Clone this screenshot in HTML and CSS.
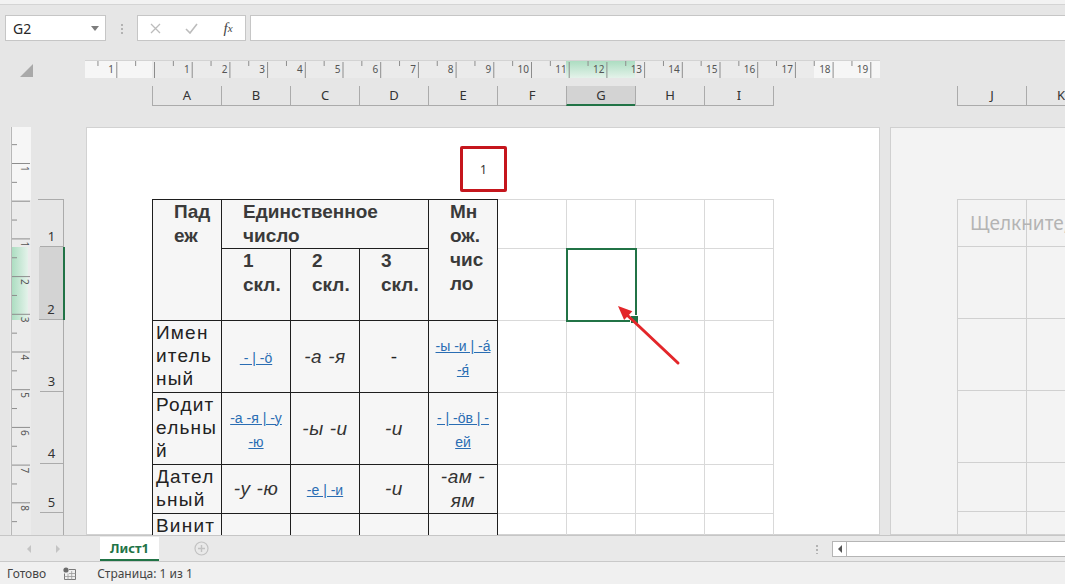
FILE: index.html
```html
<!DOCTYPE html>
<html lang="ru">
<head>
  <meta charset="UTF-8">
  <meta name="viewport" content="width=device-width, initial-scale=1.0">
  <title>Книга1 - Excel</title>
  <link rel="stylesheet" href="styles.css">
</head>
<body>
  <div class="titlebar"></div>

  <!-- Name box + formula bar -->
  <div class="formula-row">
    <div class="namebox"><span>G2</span><span class="caret"></span></div>
    <div class="grip"></div>
    <div class="fx-buttons">
      <span class="fx-btn">
        <svg width="11" height="11" viewBox="0 0 11 11"><path d="M1 1L10 10M10 1L1 10" stroke="#bcbcbc" stroke-width="1.3" fill="none"/></svg>
      </span>
      <span class="fx-btn">
        <svg width="13" height="11" viewBox="0 0 13 11"><path d="M1 6L5 10L12 1" stroke="#bcbcbc" stroke-width="1.6" fill="none"/></svg>
      </span>
      <span class="fx-btn fx">f<small>x</small></span>
    </div>
    <div class="formula-input"></div>
  </div>

  <!-- Horizontal ruler -->
  <div class="ruler-row">
    <svg class="corner" width="13" height="13" viewBox="0 0 13 13"><path d="M13 0L13 13L0 13Z" fill="#a9a9a9"/></svg>
    <svg class="hruler" width="795" height="18" viewBox="0 0 795 18">
      <defs>
        <pattern id="hticks" patternUnits="userSpaceOnUse" x="31.3" y="0" width="37.7" height="18">
          <path d="M0.5 2V18M19.35 1V6" stroke="#8c8c8c" stroke-width="1"/>
        </pattern>
        <linearGradient id="hsel" x1="0" y1="0" x2="0" y2="1">
          <stop offset="0" stop-color="#a9dcbf"/>
          <stop offset="1" stop-color="#e4f2ea"/>
        </linearGradient>
      </defs>
      <rect width="795" height="18" fill="#ebebeb"/>
      <rect width="67" height="18" fill="#f6f6f6"/>
      <rect x="729" width="66" height="18" fill="#f6f6f6"/>
      <rect x="481" width="69" height="18" fill="url(#hsel)"/>
      <rect x="0" y="1" width="795" height="17" fill="url(#hticks)"/>
      <path d="M0 0.5H795" stroke="#d3d3d3"/>
      <g class="rnum" text-anchor="end">
        <text x="29" y="13">1</text>
        <text x="104.7" y="13">1</text>
        <text x="142.4" y="13">2</text>
        <text x="180.1" y="13">3</text>
        <text x="217.8" y="13">4</text>
        <text x="255.5" y="13">5</text>
        <text x="293.2" y="13">6</text>
        <text x="330.9" y="13">7</text>
        <text x="368.6" y="13">8</text>
        <text x="406.3" y="13">9</text>
        <text x="444" y="13">10</text>
        <text x="481.7" y="13">11</text>
        <text x="519.4" y="13">12</text>
        <text x="557.1" y="13">13</text>
        <text x="594.8" y="13">14</text>
        <text x="632.5" y="13">15</text>
        <text x="670.2" y="13">16</text>
        <text x="707.9" y="13">17</text>
        <text x="745.6" y="13">18</text>
        <text x="783.3" y="13">19</text>
      </g>
    </svg>
  </div>

  <!-- Column headers -->
  <div class="colheads">
    <div class="ch">A</div>
    <div class="ch">B</div>
    <div class="ch">C</div>
    <div class="ch">D</div>
    <div class="ch">E</div>
    <div class="ch">F</div>
    <div class="ch active">G</div>
    <div class="ch">H</div>
    <div class="ch last">I</div>
    <div class="ch-gap"></div>
    <div class="ch">J</div>
    <div class="ch">K</div>
  </div>

  <div class="main">
    <!-- Vertical ruler -->
    <svg class="vruler" width="21" height="408" viewBox="0 0 21 408">
      <defs>
        <pattern id="vticks" patternUnits="userSpaceOnUse" x="0" y="36" width="21" height="37.7">
          <path d="M1 0.5H20M1 19.35H7" stroke="#8c8c8c" stroke-width="1"/>
        </pattern>
        <linearGradient id="vsel" x1="0" y1="0" x2="1" y2="0">
          <stop offset="0" stop-color="#a9dcbf"/>
          <stop offset="1" stop-color="#e4f2ea"/>
        </linearGradient>
      </defs>
      <rect width="21" height="408" fill="#ebebeb"/>
      <rect x="1" width="20" height="73" fill="#f6f6f6"/>
      <rect x="1" y="120" width="17" height="73" fill="url(#vsel)"/>
      <rect x="1" y="0" width="20" height="408" fill="url(#vticks)"/>
      <path d="M1.5 0V408" stroke="#b8b8b8"/>
      <g class="rnum">
        <text transform="translate(11 39) rotate(90)">1</text>
        <text transform="translate(11 114.4) rotate(90)">1</text>
        <text transform="translate(11 152.1) rotate(90)">2</text>
        <text transform="translate(11 189.8) rotate(90)">3</text>
        <text transform="translate(11 227.5) rotate(90)">4</text>
        <text transform="translate(11 265.2) rotate(90)">5</text>
        <text transform="translate(11 302.9) rotate(90)">6</text>
        <text transform="translate(11 340.6) rotate(90)">7</text>
        <text transform="translate(11 378.3) rotate(90)">8</text>
      </g>
    </svg>

    <!-- Row headers -->
    <div class="rowheads">
      <div class="rh r1">1</div>
      <div class="rh r2 active">2</div>
      <div class="rh r3">3</div>
      <div class="rh r4">4</div>
      <div class="rh r5">5</div>
      <div class="rh r6"></div>
    </div>

    <!-- Page 1 -->
    <div class="page">
      <div class="page-head">
        <div class="page-num">1</div>
      </div>
      <table class="sheet">
        <colgroup>
          <col><col><col><col><col><col><col><col><col>
        </colgroup>
        <tr class="r1">
          <th class="t hd" rowspan="2">Пад<br>еж</th>
          <th class="t hd" colspan="3">Единственное<br>число</th>
          <th class="t hd" rowspan="2">Мн<br>ож.<br>чис<br>ло</th>
          <td class="g"></td><td class="g"></td><td class="g"></td><td class="g"></td>
        </tr>
        <tr class="r2">
          <th class="t hd">1<br>скл.</th>
          <th class="t hd">2<br>скл.</th>
          <th class="t hd">3<br>скл.</th>
          <td class="g"></td><td class="g sel"></td><td class="g"></td><td class="g"></td>
        </tr>
        <tr class="r3">
          <td class="t case">Имен<br>итель<br>ный</td>
          <td class="t c"><a class="lk" href="#">&nbsp;- | -ӧ</a></td>
          <td class="t c it">-а -я</td>
          <td class="t c">-</td>
          <td class="t c"><a class="lk" href="#">-ы -и | -а́<br>-я́</a></td>
          <td class="g"></td><td class="g"></td><td class="g"></td><td class="g"></td>
        </tr>
        <tr class="r4">
          <td class="t case">Родит<br>ельны<br>й</td>
          <td class="t c"><a class="lk" href="#">-а -я | -у<br>-ю</a></td>
          <td class="t c it">-ы -и</td>
          <td class="t c it">-и</td>
          <td class="t c"><a class="lk" href="#">- | -ӧв | -<br>ей</a></td>
          <td class="g"></td><td class="g"></td><td class="g"></td><td class="g"></td>
        </tr>
        <tr class="r5">
          <td class="t case">Дател<br>ьный</td>
          <td class="t c it">-у -ю</td>
          <td class="t c"><a class="lk" href="#">-е | -и</a></td>
          <td class="t c it">-и</td>
          <td class="t c it">-ам -<br>ям</td>
          <td class="g"></td><td class="g"></td><td class="g"></td><td class="g"></td>
        </tr>
        <tr class="r6">
          <td class="t case">Винит</td>
          <td class="t"></td><td class="t"></td><td class="t"></td><td class="t"></td>
          <td class="g"></td><td class="g"></td><td class="g"></td><td class="g"></td>
        </tr>
      </table>

      <svg class="arrow" width="75" height="70" viewBox="0 0 75 70">
        <path d="M14 14L66 63" stroke="#e3262a" stroke-width="3" stroke-linecap="round"/>
        <path d="M6 6L12.1 19.9L20.3 11.3Z" fill="#e3262a"/>
      </svg>
    </div>

    <!-- Page 2 (empty) -->
    <div class="page next">
      <div class="page-head"></div>
      <table class="sheet blank">
        <colgroup><col><col><col></colgroup>
        <tr class="r1"><td class="hint">Щелкните, чтобы добавить данные</td><td></td><td></td></tr>
        <tr class="r2"><td></td><td></td><td></td></tr>
        <tr class="r3"><td></td><td></td><td></td></tr>
        <tr class="r4"><td></td><td></td><td></td></tr>
        <tr class="r5"><td></td><td></td><td></td></tr>
        <tr class="r6"><td></td><td></td><td></td></tr>
      </table>
    </div>
  </div>

  <!-- Sheet tabs -->
  <div class="tabbar">
    <div class="tabnav">
      <span class="tri left"></span>
      <span class="tri right"></span>
    </div>
    <div class="tab">Лист1</div>
    <div class="addsheet">
      <svg width="15" height="15" viewBox="0 0 15 15"><circle cx="7.5" cy="7.5" r="6.5" fill="none" stroke="#c2c2c2" stroke-width="1.2"/><path d="M7.5 4V11M4 7.5H11" stroke="#c2c2c2" stroke-width="1.4"/></svg>
    </div>
    <div class="spacer"></div>
    <div class="grip small"></div>
    <div class="hscroll">
      <span class="sbtn"><span class="tri left dark"></span></span>
      <span class="track"></span>
    </div>
  </div>

  <!-- Status bar -->
  <div class="statusbar">
    <span class="st-ready">Готово</span>
    <svg class="st-icon" width="13" height="13" viewBox="0 0 13 13">
      <circle cx="3" cy="3" r="2.6" fill="#6b6b6b"/>
      <path d="M6 2.5H12.5V12.5H1.5V6.5" fill="none" stroke="#7a7a7a"/>
      <path d="M1.5 9.5H12.5M5 6.5V12.5M8.7 4V12.5M6 6.5H12.5" stroke="#9a9a9a" stroke-width="0.8"/>
    </svg>
    <span class="st-page">Страница: 1 из 1</span>
  </div>
</body>
</html>
```

FILE: styles.css
```css
* { margin: 0; padding: 0; box-sizing: border-box; }
body { width: 1065px; height: 584px; overflow: hidden; background: #e6e6e6; font-family: "Noto Sans", "Open Sans", sans-serif; font-size: 12px; color: #444; }

/* top strip + formula bar */
.titlebar { height: 5px; background: #f2f2f2; border-bottom: 1px solid #d4d4d4; }
.formula-row { display: flex; height: 26px; margin-top: 10px; }
.namebox { width: 101px; margin-left: 5px; background: #fff; border: 1px solid #c6c6c6; display: flex; align-items: center; justify-content: space-between; padding: 0 6px 0 7px; font-size: 14px; color: #262626; }
.caret { width: 0; height: 0; border-left: 4px solid transparent; border-right: 4px solid transparent; border-top: 5px solid #7d7d7d; }
.grip { width: 2px; height: 11px; align-self: center; margin: 0 14px 0 15px; background: radial-gradient(circle, #b3b3b3 0.9px, transparent 1.1px) 0 0 / 2px 4px; }
.fx-buttons { width: 109px; background: #fff; border: 1px solid #c6c6c6; display: flex; }
.fx-btn { width: 36px; display: flex; align-items: center; justify-content: center; }
.fx { font-family: "Liberation Serif", serif; font-style: italic; font-size: 15px; color: #444; padding-left: 2px; }
.fx small { font-size: 11px; }
.formula-input { flex: 1; margin-left: 4px; background: #fff; border: 1px solid #c6c6c6; border-right: none; }

/* rulers */
.ruler-row { display: flex; align-items: flex-end; height: 18px; margin-top: 19px; }
.corner { margin-left: 20px; margin-bottom: 1px; }
.hruler { margin-left: 52px; display: block; }
.rnum { font-family: "Noto Sans", sans-serif; font-size: 10px; fill: #555; }
.vruler { display: block; margin-left: 10px; margin-top: 21px; flex-shrink: 0; }

/* column headers */
.colheads { display: flex; height: 20px; margin-top: 8px; padding-left: 152px; }
.ch { width: 69px; flex-shrink: 0; border-left: 1px solid #ababab; border-bottom: 1px solid #ababab; text-align: center; line-height: 19px; font-size: 13px; color: #333; }
.ch.last { border-right: 1px solid #ababab; width: 70px; }
.ch.active { background: #d3d3d3; border-bottom: 2px solid #217346; }
.ch-gap { width: 183px; flex-shrink: 0; }

/* sheet area */
.main { display: flex; height: 429px; overflow: hidden; }
.rowheads { width: 26px; margin-left: 7px; margin-top: 93px; border-right: 1px solid #ababab; flex-shrink: 0; border-top: 1px solid #ababab; }
.rh { display: flex; align-items: flex-end; justify-content: center; padding-bottom: 1px; border-bottom: 1px solid #ababab; font-size: 13px; color: #333; margin-left: 2px; }
.rh.active { background: #d3d3d3; box-shadow: 2px 0 0 #217346; margin-left: 1px; }
.rowheads .r1 { height: 47px; }
.rowheads .r2 { height: 73px; }
.rowheads .r3 { height: 72px; }
.rowheads .r4 { height: 72px; }
.rowheads .r5 { height: 49px; }
.rowheads .r6 { height: 49px; }

.page { position: relative; width: 794px; margin-left: 22px; margin-top: 21px; background: #fff; border: 1px solid #d2d2d2; flex-shrink: 0; }
.page.next { width: 200px; margin-left: 10px; background: #f3f3f3; border-color: #d0d0d0; overflow: hidden; }
.page-head { height: 71px; display: flex; justify-content: center; align-items: flex-start; }
.page-num { width: 47px; height: 46px; margin-top: 18px; margin-left: 1px; border: 3px solid #c5161d; border-radius: 2px; display: flex; align-items: center; justify-content: center; font-size: 12px; color: #333; }

/* first two rows come out one pixel taller than set (collapsed borders) */
.sheet { border-collapse: collapse; table-layout: fixed; width: 621px; margin-left: 65px; }
.sheet col { width: 69px; }
.sheet .r1 { height: 47px; }
.sheet .r2 { height: 72px; }
.sheet .r3 { height: 72px; }
.sheet .r4 { height: 72px; }
.sheet .r5 { height: 49px; }
.sheet .r6 { height: 49px; }
.sheet td, .sheet th { padding: 0; white-space: nowrap; }
.t { background: #f6f6f6; border: 1px solid #1e1e1e; font-family: "Liberation Sans", Arial, sans-serif; font-size: 19px; line-height: 24px; color: #222; }
.hd { text-align: left; vertical-align: top; font-weight: bold; color: #3a3a3a; padding: 0 0 0 21px !important; }
.case { vertical-align: top; padding: 0 0 0 3px !important; line-height: 23px; letter-spacing: 1.2px; }
.c { text-align: center; vertical-align: middle; }
.it { font-style: italic; color: #333; letter-spacing: 0.6px; }
.lk { font-size: 14px; line-height: 20px; color: #2a6db3; text-decoration: underline; letter-spacing: 0; }
.g { border: 1px solid #d9d9d9; }
.g.sel { position: relative; outline: 2px solid #217346; outline-offset: -1px; }
.g.sel::after { content: ''; position: absolute; right: -4px; bottom: -4px; width: 7px; height: 7px; background: #217346; border: 1px solid #fff; }
.arrow { position: absolute; left: 525px; top: 172px; }

.blank { width: 207px; margin-left: 66px; }
.blank td { border: 1px solid #d0d0d0; }
.hint { font-size: 19px; color: #b4b4b4; padding-left: 12px !important; overflow: visible; }

/* sheet tabs */
.tabbar { display: flex; height: 26px; border-top: 1px solid #c6c6c6; background: #e9e9e9; }
.tabnav { width: 100px; display: flex; align-items: center; padding-left: 27px; gap: 25px; }
.tri { width: 0; height: 0; border-top: 4px solid transparent; border-bottom: 4px solid transparent; }
.tri.left { border-right: 4px solid #c4c4c4; }
.tri.right { border-left: 4px solid #c4c4c4; }
.tri.left.dark { border-right-color: #555; }
.tab { width: 59px; margin-top: 1px; background: #fff; border-bottom: 2px solid #217346; display: flex; align-items: center; justify-content: center; font-weight: bold; font-size: 13px; color: #217346; }
.addsheet { margin-left: 35px; display: flex; align-items: center; }
.spacer { flex: 1; }
.grip.small { height: 10px; margin: 0 14px 0 0; }
.hscroll { width: 233px; display: flex; margin: 5px 0 4px; }
.sbtn { width: 15px; background: #fff; border: 1px solid #b5b5b5; display: flex; align-items: center; justify-content: center; }
.track { flex: 1; background: #fff; border: 1px solid #b5b5b5; border-left: none; border-right: none; }

/* status bar */
.statusbar { height: 23px; border-top: 1px solid #c9c9c9; background: #f0f0f0; display: flex; align-items: center; font-size: 12px; color: #444; }
.st-ready { margin-left: 7px; }
.st-icon { margin-left: 17px; }
.st-page { margin-left: 21px; }
```
